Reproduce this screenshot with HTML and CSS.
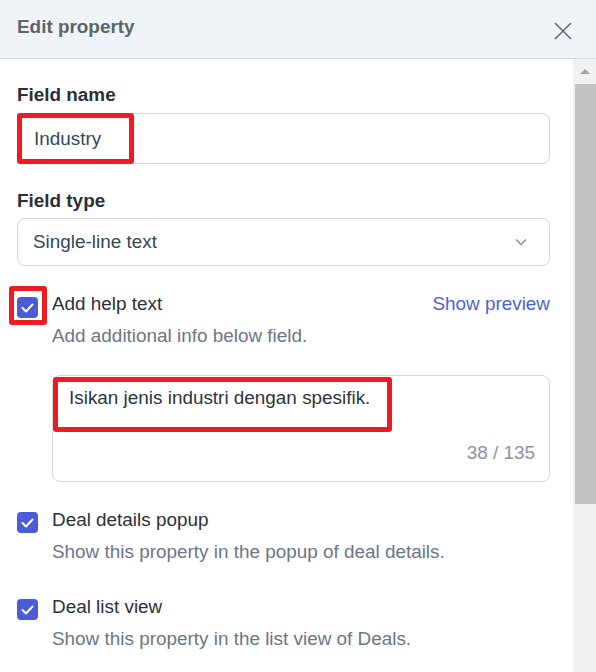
FILE: index.html
```html
<!DOCTYPE html>
<html lang="en">
  <head>
    <meta name="viewport" content="width=device-width, initial-scale=1.0" />
    <title>Edit property</title>
    <link rel="stylesheet" href="styles.css">
  </head>
  <body>
    <div class="panel">
      <header class="panel-head">
        <h2 class="panel-title">Edit property</h2>
        <button class="close-btn" aria-label="Close">
          <svg width="18" height="18" viewBox="0 0 18 18">
            <path d="M1 1 L17 17 M17 1 L1 17" stroke="currentColor" stroke-width="1.6" fill="none" />
          </svg>
        </button>
      </header>

      <div class="panel-body">
        <div class="form">
          <label class="field-label">Field name</label>
          <div class="input">
            Industry
            <span class="mark mark-name"></span>
          </div>

          <label class="field-label">Field type</label>
          <div class="select">
            <span>Single-line text</span>
            <svg width="12" height="8" viewBox="0 0 12 8">
              <path d="M1 1.5 L6 6.5 L11 1.5" stroke="#8592a0" stroke-width="1.4" fill="none" />
            </svg>
          </div>

          <div class="option option-help">
            <span class="check">
              <svg width="13" height="10" viewBox="0 0 13 10">
                <path d="M1.5 5 L5 8.5 L11.5 1.5" stroke="#fff" stroke-width="2" fill="none" stroke-linecap="round" stroke-linejoin="round" />
              </svg>
              <span class="mark mark-check"></span>
            </span>
            <div class="option-text">
              <div class="option-row">
                <span class="option-title">Add help text</span>
                <a class="link" href="#">Show preview</a>
              </div>
              <p class="option-desc">Add additional info below field.</p>
              <div class="help-box">
                <p class="help-text">Isikan jenis industri dengan spesifik.</p>
                <span class="counter">38 / 135</span>
                <span class="mark mark-help"></span>
              </div>
            </div>
          </div>

          <div class="option">
            <span class="check">
              <svg width="13" height="10" viewBox="0 0 13 10">
                <path d="M1.5 5 L5 8.5 L11.5 1.5" stroke="#fff" stroke-width="2" fill="none" stroke-linecap="round" stroke-linejoin="round" />
              </svg>
            </span>
            <div class="option-text">
              <span class="option-title">Deal details popup</span>
              <p class="option-desc">Show this property in the popup of deal details.</p>
            </div>
          </div>

          <div class="option">
            <span class="check">
              <svg width="13" height="10" viewBox="0 0 13 10">
                <path d="M1.5 5 L5 8.5 L11.5 1.5" stroke="#fff" stroke-width="2" fill="none" stroke-linecap="round" stroke-linejoin="round" />
              </svg>
            </span>
            <div class="option-text">
              <span class="option-title">Deal list view</span>
              <p class="option-desc">Show this property in the list view of Deals.</p>
            </div>
          </div>
        </div>

        <div class="scrollbar">
          <span class="scroll-arrow"></span>
          <span class="scroll-thumb"></span>
        </div>
      </div>
    </div>
  </body>
</html>
```

FILE: styles.css
```css
html,
body {
  margin: 0;
  height: 100%;
  font-family: "Liberation Sans", Arial, sans-serif;
  font-size: 18.9px;
  background: #fff;
  overflow: hidden;
}

.panel {
  display: flex;
  flex-direction: column;
  height: 672px;
  width: 596px;
}

.panel-head {
  display: flex;
  align-items: center;
  justify-content: space-between;
  height: 58px;
  padding: 0 24px 0 17px;
  background: #f0f3f8;
  border-bottom: 1px solid #d5dbe3;
  flex-shrink: 0;
}

.panel-title {
  margin: 0 0 4px;
  font-size: 18.9px;
  font-weight: bold;
  color: #5b6667;
}

.close-btn {
  border: 0;
  background: none;
  padding: 0;
  margin-top: 4px;
  color: #5f6b76;
  display: flex;
}

.panel-body {
  display: flex;
  flex: 1;
  min-height: 0;
}

.form {
  flex: 1;
  padding: 24px 23px 0 17px;
}

.field-label {
  display: block;
  font-weight: bold;
  line-height: 24px;
  color: #2b3037;
  margin-bottom: 6px;
}

.input,
.select {
  position: relative;
  display: flex;
  align-items: center;
  box-sizing: border-box;
  border: 1px solid #d3d7dc;
  border-radius: 8px;
  color: #33475b;
}

.input {
  height: 51px;
  padding-left: 16px;
  margin-bottom: 25px;
}

.select {
  height: 48px;
  padding: 0 22px 0 15px;
  justify-content: space-between;
  margin-top: -1px;
  margin-bottom: 26px;
}

/* red annotation frames */
.mark {
  position: absolute;
  border: 5px solid #ed1c24;
  border-radius: 3px;
  box-sizing: border-box;
}

.mark-name {
  left: -1px;
  top: -1px;
  width: 117px;
  height: 51px;
}

.mark-check {
  left: -8px;
  top: -11px;
  width: 38px;
  height: 39px;
}

.mark-help {
  left: 0;
  top: 1px;
  width: 339px;
  height: 55px;
}

.option {
  display: flex;
  gap: 14px;
  margin-bottom: 31px;
}

.check {
  position: relative;
  width: 21px;
  height: 21px;
  border-radius: 4px;
  background: #4b5cd9;
  display: flex;
  align-items: center;
  justify-content: center;
  margin-top: 4px;
  flex-shrink: 0;
}

.option-help .check {
  margin-top: 5px;
}

.option-text {
  flex: 1;
}

.option-row {
  display: flex;
  justify-content: space-between;
}

.option-title {
  line-height: 24px;
  color: #2c3038;
}

.link {
  line-height: 24px;
  color: #4a62d8;
  text-decoration: none;
}

.option-desc {
  margin: 8px 0 0;
  line-height: 24px;
  color: #6b7686;
}

.help-box {
  position: relative;
  display: flex;
  flex-direction: column;
  box-sizing: border-box;
  height: 107px;
  margin: 27px 0 -5px;
  padding: 10px 14px 16px 16px;
  border: 1px solid #d3d7dc;
  border-radius: 8px;
}

.help-text {
  margin: 0;
  line-height: 24px;
  color: #2d3540;
}

.counter {
  margin-top: auto;
  align-self: flex-end;
  line-height: 24px;
  color: #8a94a0;
}

/* the panel's scroll track */
.scrollbar {
  position: relative;
  width: 23px;
  background: #f1f1f1;
  display: flex;
  flex-direction: column;
  align-items: flex-end;
}

.scroll-arrow {
  width: 0;
  height: 0;
  margin: 10px 6px 0 0;
  border-left: 5px solid transparent;
  border-right: 5px solid transparent;
  border-bottom: 5px solid #a3a3a3;
}

.scroll-thumb {
  width: 21px;
  height: 420px;
  margin-top: 10px;
  background: #c1c1c1;
}
```
